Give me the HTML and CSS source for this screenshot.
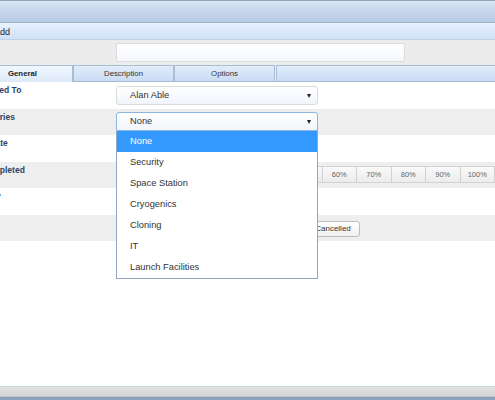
FILE: index.html
```html
<!DOCTYPE html>
<html lang="en">
<head>
    <meta charset="UTF-8">
    <title>Add Task</title>
    <link rel="stylesheet" href="styles.css">
</head>
<body>
    <div class="dialog">
        <div class="title-bar"></div>
        <div class="sub-bar">Add</div>
        <div class="name-row">
            <input class="name-input" type="text">
        </div>
        <div class="tabs">
            <div class="tab active">General</div>
            <div class="tab">Description</div>
            <div class="tab">Options</div>
            <div class="tab-fill"></div>
        </div>
        <div class="form">
            <div class="row">
                <div class="label">Assigned To</div>
                <div class="field">
                    <div class="select">Alan Able<span class="arrow"></span></div>
                </div>
            </div>
            <div class="row alt">
                <div class="label">Categories</div>
                <div class="field">
                    <div class="select open">None<span class="arrow"></span>
                        <ul class="dropdown">
                            <li class="selected">None</li>
                            <li>Security</li>
                            <li>Space Station</li>
                            <li>Cryogenics</li>
                            <li>Cloning</li>
                            <li>IT</li>
                            <li>Launch Facilities</li>
                        </ul>
                    </div>
                </div>
            </div>
            <div class="row">
                <div class="label">Due Date</div>
                <div class="field"></div>
            </div>
            <div class="row alt">
                <div class="label">% Completed</div>
                <div class="field">
                    <div class="percent-group">
                        <span class="percent-btn">0%</span>
                        <span class="percent-btn">10%</span>
                        <span class="percent-btn">20%</span>
                        <span class="percent-btn">30%</span>
                        <span class="percent-btn">40%</span>
                        <span class="percent-btn">50%</span>
                        <span class="percent-btn">60%</span>
                        <span class="percent-btn">70%</span>
                        <span class="percent-btn">80%</span>
                        <span class="percent-btn">90%</span>
                        <span class="percent-btn">100%</span>
                    </div>
                </div>
            </div>
            <div class="row">
                <div class="label">Priority</div>
                <div class="field"></div>
            </div>
            <div class="row alt">
                <div class="label">Status</div>
                <div class="field">
                    <span class="status-btn wide">Not Started</span>
                    <span class="status-btn wide">In Progress</span>
                    <span class="status-btn">Cancelled</span>
                </div>
            </div>
        </div>
        <div class="footer"></div>
    </div>
</body>
</html>
```

FILE: styles.css
```css
/* Add task dialog */
html, body {
    margin: 0;
    padding: 0;
    height: 400px;
    overflow: hidden;
    background-color: #fff;
}

body {
    font-family: 'Liberation Sans', Arial, sans-serif;
    color: #333;
}

.dialog {
    margin-left: -30px;
    width: 525px;
    height: 400px;
    display: flex;
    flex-direction: column;
}

.title-bar {
    height: 21px;
    border-top: 1px solid #97a7bb;
    border-bottom: 1px solid #9fb2cb;
    background: linear-gradient(#dbe6f4, #c9d8ed 40%, #b9cbe5);
}

.sub-bar {
    height: 15px;
    padding-left: 24px;
    border-top: 1px solid #eef4fc;
    border-bottom: 1px solid #c3d3e6;
    background: linear-gradient(#e6f0fd, #cfe1f8);
    font-size: 9px;
    line-height: 16px;
    color: #222;
}

.name-row {
    height: 24px;
    display: flex;
    align-items: center;
    background-color: #ececec;
}

.name-input {
    margin-left: 146px;
    width: 289px;
    height: 19px;
    box-sizing: border-box;
    border: 1px solid #dcdcdc;
    border-radius: 2px;
    background: linear-gradient(#fff, #f3f7fe);
}

.tabs {
    height: 17px;
    display: flex;
    padding-left: 2px;
    background-color: #ececec;
    border-bottom: 1px solid #a7bbd4;
}

.tab {
    width: 99px;
    margin-top: 1px;
    border: 1px solid #a9bdd5;
    border-bottom: none;
    background: linear-gradient(#e2edfb, #c9dbf4);
    font-size: 7.8px;
    line-height: 15px;
    text-align: center;
    color: #333;
}

.tab.active {
    margin-bottom: -1px;
    background: linear-gradient(#f3f8fe, #dce9f9);
    font-weight: bold;
    color: #222;
}

.tab-fill {
    flex: 1;
    margin-top: 1px;
    margin-left: 1px;
    border: 1px solid #a9bdd5;
    border-bottom: none;
    border-right: none;
    background: linear-gradient(#e2edfb, #c9dbf4);
}

.form {
    flex: 1;
}

.row {
    height: 26.5px;
    display: flex;
    align-items: center;
}

.row.alt {
    background-color: #eeeeee;
}

.label {
    width: 145px;
    padding-left: 1px;
    align-self: flex-start;
    padding-top: 3px;
    font-size: 8.5px;
    font-weight: bold;
    color: #2c4464;
    white-space: nowrap;
}

.field {
    flex: 1;
    display: flex;
    align-items: center;
}

.select {
    position: relative;
    width: 202px;
    height: 19px;
    box-sizing: border-box;
    padding-left: 13px;
    border: 1px solid #dadada;
    border-radius: 3px;
    background: linear-gradient(#fff, #f1f5fb);
    font-size: 9.3px;
    line-height: 17px;
    color: #333;
}

.select.open {
    border-color: #8db4e2;
    border-radius: 3px 3px 0 0;
}

.arrow {
    position: absolute;
    right: 6px;
    top: 7px;
    border-left: 2.5px solid transparent;
    border-right: 2.5px solid transparent;
    border-top: 4px solid #222;
}

.dropdown {
    position: absolute;
    top: 18px;
    left: -1px;
    width: 202px;
    box-sizing: border-box;
    margin: 0;
    padding: 0;
    list-style: none;
    background-color: #fff;
    border: 1px solid #93a7c0;
    border-top: none;
    z-index: 2;
}

.dropdown li {
    height: 21px;
    padding-left: 13px;
    line-height: 21px;
    font-size: 9.3px;
    color: #333;
}

.dropdown li.selected {
    background-color: #3399ff;
    color: #fff;
}

.percent-group {
    display: flex;
}

.percent-btn {
    width: 34.5px;
    height: 17px;
    box-sizing: border-box;
    border: 1px solid #d2d2d2;
    border-left: none;
    background: linear-gradient(#fafafa, #ececec);
    font-size: 7.5px;
    line-height: 15px;
    text-align: center;
    color: #666;
}

.percent-btn:first-child {
    border-left: 1px solid #d2d2d2;
}

.status-btn {
    width: 54px;
    height: 16px;
    margin-right: 3px;
    margin-top: 3px;
    box-sizing: border-box;
    border: 1px solid #bdbdbd;
    border-radius: 3px;
    background: linear-gradient(#fff, #f0f0f0);
    font-size: 8px;
    line-height: 14px;
    text-align: center;
    color: #333;
}

.status-btn.wide {
    width: 92px;
}

.footer {
    height: 9px;
    border-top: 1px solid #c6d8de;
    border-bottom: 1px solid #bcc6d0;
    background: linear-gradient(#e0e0e0, #d6d6d6);
    box-shadow: 0 3px 0 #8aa3ba;
    margin-bottom: 3px;
}
```
